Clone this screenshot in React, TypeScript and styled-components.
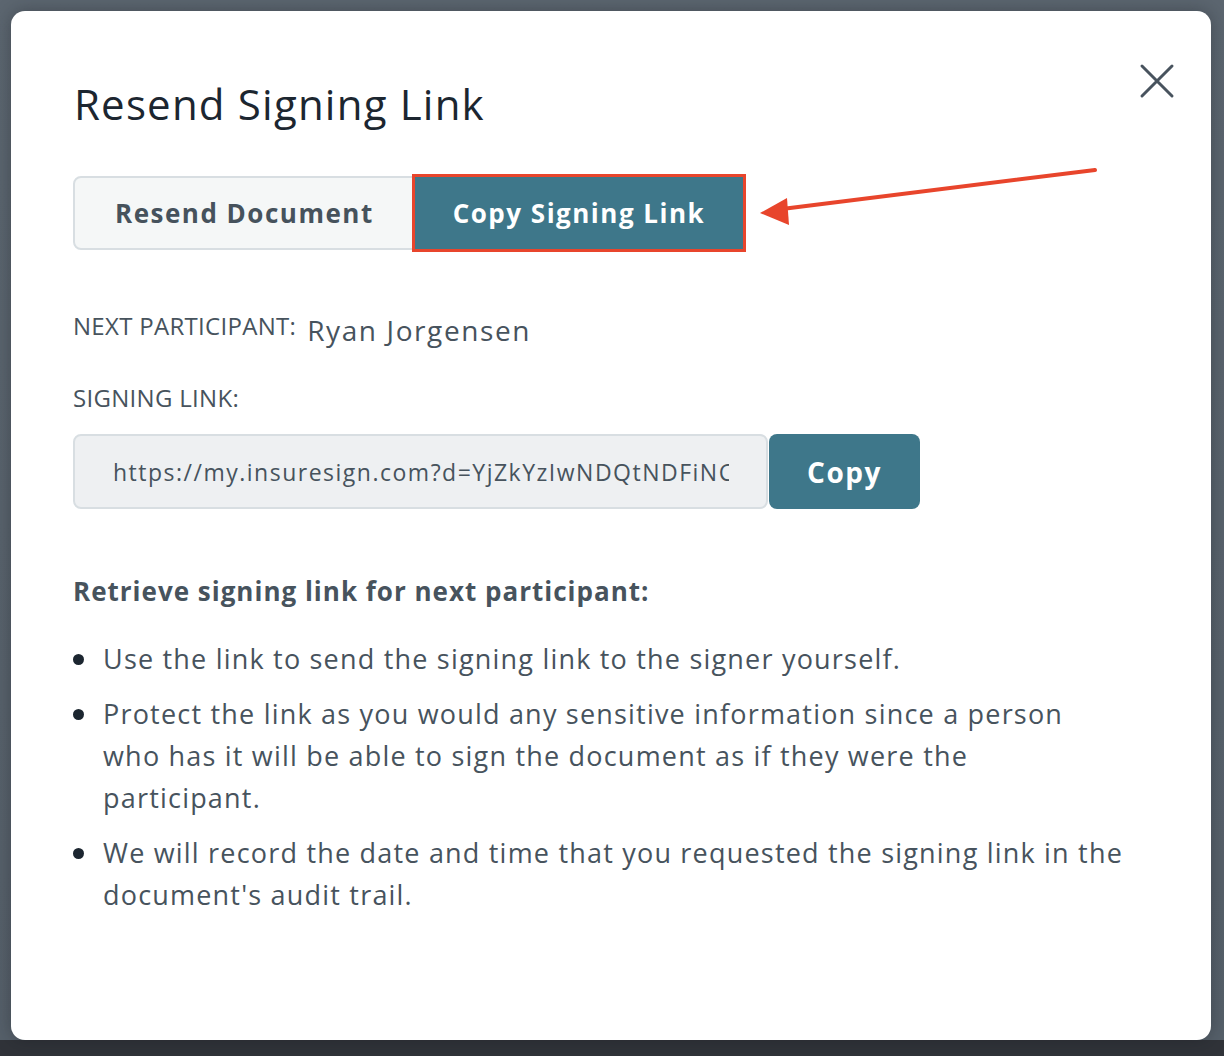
import React from 'react';
import styled, { createGlobalStyle } from 'styled-components';

const GlobalStyle = createGlobalStyle`
  html, body {
    margin: 0;
    padding: 0;
  }
  body {
    background: linear-gradient(to bottom, #5c6670 0, #56606a 1040px, #303339 1040px, #303339 100%);
    min-height: 1056px;
    font-family: "Open Sans", "Liberation Sans", sans-serif;
  }
`;

const Page = styled.div`
  width: 1224px;
  height: 1056px;
  padding: 11px 13px 16px 11px;
  box-sizing: border-box;
`;

const Dialog = styled.div`
  position: relative;
  height: 100%;
  background: #ffffff;
  border-radius: 14px;
  box-shadow: 0 0 18px rgba(20, 24, 30, 0.35);
  padding: 66px 62px 0 62px;
  box-sizing: border-box;
  color: #47535d;
`;

const Title = styled.h2`
  margin: 0 0 0 1px;
  font-size: 42px;
  font-weight: 400;
  letter-spacing: 1.2px;
  line-height: 54px;
  color: #1c2630;
`;

const CloseButton = styled.button`
  position: absolute;
  top: 51px;
  right: 35px;
  width: 38px;
  height: 38px;
  padding: 0;
  border: none;
  background: transparent;
  cursor: pointer;
  display: flex;
  align-items: center;
  justify-content: center;
`;

const TabRow = styled.div`
  display: flex;
  align-items: center;
  margin-top: 43px;
  position: relative;
`;

const Tab = styled.button<{ $active?: boolean }>`
  height: ${(p) => (p.$active ? '78px' : '74px')};
  padding: 0 ${(p) => (p.$active ? '38px' : '40px')};
  margin-left: ${(p) => (p.$active ? '-4px' : '0')};
  font-family: inherit;
  font-size: 26px;
  font-weight: 700;
  letter-spacing: 1.5px;
  box-sizing: border-box;
  cursor: pointer;
  color: ${(p) => (p.$active ? '#ffffff' : '#46525c')};
  background: ${(p) => (p.$active ? '#3e778a' : '#f5f7f7')};
  border: ${(p) => (p.$active ? '3px solid #e8452c' : '2px solid #d8dee2')};
  border-radius: ${(p) => (p.$active ? '0' : '8px 0 0 8px')};
  position: relative;
`;

const Arrow = styled.svg`
  position: absolute;
  left: 681px;
  top: -10px;
  overflow: visible;
`;

const InfoRow = styled.div`
  display: flex;
  align-items: baseline;
  gap: 11px;
  margin-top: 53px;
`;

const Label = styled.span`
  font-size: 24px;
  font-weight: 500;
  letter-spacing: 0.3px;
  text-transform: uppercase;
  color: #47535d;
`;

const Participant = styled.span`
  font-size: 28px;
  font-weight: 500;
  letter-spacing: 1.6px;
  color: #47535d;
  position: relative;
  top: 6px;
`;

const FieldLabel = styled(Label)`
  display: block;
  margin-top: 38px;
`;

const LinkRow = styled.div`
  display: flex;
  margin-top: 20px;
`;

const LinkInput = styled.input`
  width: 695px;
  height: 75px;
  box-sizing: border-box;
  padding: 0 37px 0 38px;
  font-family: inherit;
  font-size: 23px;
  letter-spacing: 1.5px;
  color: #47535d;
  background: #eef0f2;
  border: 2px solid #d8dee2;
  border-radius: 8px;
  outline: none;
`;

const CopyButton = styled.button`
  width: 151px;
  height: 75px;
  margin-left: 1px;
  border: none;
  border-radius: 8px;
  background: #3e778a;
  color: #ffffff;
  font-family: inherit;
  font-size: 28px;
  font-weight: 700;
  letter-spacing: 1.5px;
  cursor: pointer;
`;

const Heading = styled.h3`
  margin: 61px 0 0;
  font-size: 26px;
  font-weight: 700;
  letter-spacing: 1px;
  line-height: 42px;
  color: #47535d;
`;

const List = styled.ul`
  margin: 26px 0 0;
  padding: 0;
  list-style: none;
`;

const Item = styled.li`
  display: flex;
  align-items: flex-start;
  gap: 19px;
  margin-bottom: 13px;
  font-size: 27px;
  letter-spacing: 1.2px;
  line-height: 42px;
  color: #47535d;
`;

const Dot = styled.span`
  flex: none;
  width: 11px;
  height: 11px;
  margin-top: 16px;
  border-radius: 50%;
  background: #1c2630;
`;

export default function App() {
  return (
    <>
      <GlobalStyle />
      <Page>
        <Dialog>
          <Title>Resend Signing Link</Title>
          <CloseButton aria-label="Close">
            <svg width="36" height="36" viewBox="0 0 36 36">
              <path d="M3 3 L33 33 M33 3 L3 33" stroke="#48535e" strokeWidth="3" strokeLinecap="round" />
            </svg>
          </CloseButton>

          <TabRow>
            <Tab>Resend Document</Tab>
            <Tab $active>Copy Signing Link</Tab>
            <Arrow width="345" height="60" viewBox="0 0 345 60">
              <path d="M28 45 L341 6" stroke="#e8452c" strokeWidth="4" strokeLinecap="round" />
              <polygon points="6,49 33,34 35,61" fill="#e8452c" />
            </Arrow>
          </TabRow>

          <InfoRow>
            <Label>Next participant:</Label>
            <Participant>Ryan Jorgensen</Participant>
          </InfoRow>

          <FieldLabel>Signing link:</FieldLabel>
          <LinkRow>
            <LinkInput readOnly value="https://my.insuresign.com?d=YjZkYzIwNDQtNDFiNC00ZTg2LWE3OTktZjQ0" />
            <CopyButton>Copy</CopyButton>
          </LinkRow>

          <Heading>Retrieve signing link for next participant:</Heading>
          <List>
            <Item>
              <Dot />
              <span>Use the link to send the signing link to the signer yourself.</span>
            </Item>
            <Item>
              <Dot />
              <span>
                Protect the link as you would any sensitive information since a person
                <br />
                who has it will be able to sign the document as if they were the
                <br />
                participant.
              </span>
            </Item>
            <Item>
              <Dot />
              <span>
                We will record the date and time that you requested the signing link in the
                <br />
                document's audit trail.
              </span>
            </Item>
          </List>
        </Dialog>
      </Page>
    </>
  );
}
